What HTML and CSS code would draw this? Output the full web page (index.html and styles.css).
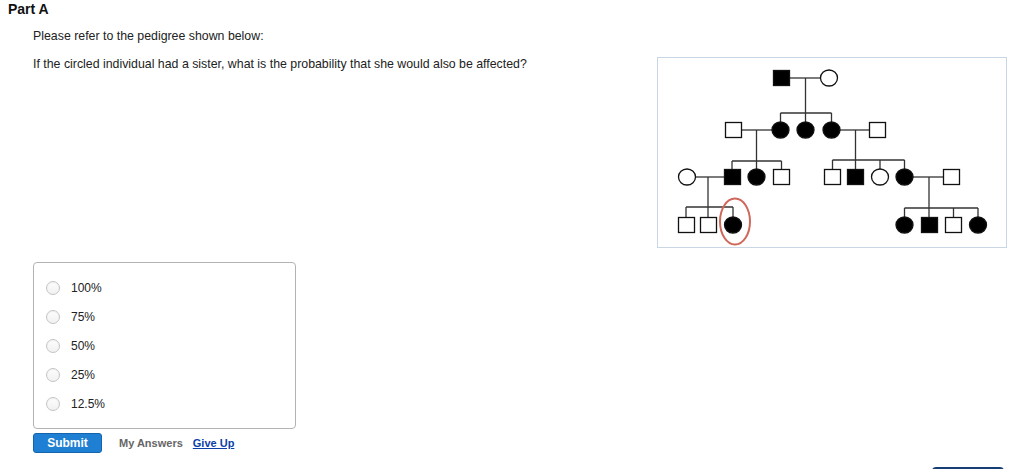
FILE: index.html
```html
<!DOCTYPE html>
<html>
<head>
<meta charset="utf-8">
<link rel="stylesheet" href="styles.css">
</head>
<body>
<h1 class="part-title">Part A</h1>
<div class="row">
  <div class="prompt">
    <p class="intro">Please refer to the pedigree shown below:</p>
    <p class="question">If the circled individual had a sister, what is the probability that she would also be affected?</p>
  </div>
  <div class="figure">
    <svg class="pedigree" width="348" height="189" viewBox="658 58 348 189" xmlns="http://www.w3.org/2000/svg">
      <g class="lines" stroke="#333" stroke-width="1.3" fill="none">
        <line x1="790" y1="78" x2="820" y2="78"/>
        <line x1="805.5" y1="78" x2="805.5" y2="113"/>
        <line x1="780.5" y1="113" x2="831.5" y2="113"/>
        <line x1="780.5" y1="113" x2="780.5" y2="123"/>
        <line x1="805.5" y1="113" x2="805.5" y2="123"/>
        <line x1="831.5" y1="113" x2="831.5" y2="123"/>
        <line x1="742" y1="130" x2="772" y2="130"/>
        <line x1="756.5" y1="130" x2="756.5" y2="161"/>
        <line x1="732" y1="161" x2="781.5" y2="161"/>
        <line x1="732" y1="161" x2="732" y2="170"/>
        <line x1="756.5" y1="161" x2="756.5" y2="170"/>
        <line x1="781.5" y1="161" x2="781.5" y2="170"/>
        <line x1="840" y1="130" x2="869" y2="130"/>
        <line x1="855.5" y1="130" x2="855.5" y2="160"/>
        <line x1="832.5" y1="160" x2="904.5" y2="160"/>
        <line x1="832.5" y1="160" x2="832.5" y2="170"/>
        <line x1="855.5" y1="160" x2="855.5" y2="170"/>
        <line x1="880" y1="160" x2="880" y2="170"/>
        <line x1="904.5" y1="160" x2="904.5" y2="170"/>
        <line x1="696" y1="177" x2="724" y2="177"/>
        <line x1="708" y1="177" x2="708" y2="207"/>
        <line x1="686" y1="207" x2="733" y2="207"/>
        <line x1="686" y1="207" x2="686" y2="218"/>
        <line x1="708" y1="207" x2="708" y2="218"/>
        <line x1="733" y1="207" x2="733" y2="218"/>
        <line x1="913" y1="177" x2="943" y2="177"/>
        <line x1="929" y1="177" x2="929" y2="208"/>
        <line x1="904.5" y1="208" x2="978" y2="208"/>
        <line x1="904.5" y1="208" x2="904.5" y2="218"/>
        <line x1="929" y1="208" x2="929" y2="218"/>
        <line x1="953.5" y1="208" x2="953.5" y2="218"/>
        <line x1="978" y1="208" x2="978" y2="218"/>
      </g>
      <g class="people" stroke="#111" stroke-width="1.3">
        <rect x="773.5" y="70.5" width="16" height="15" fill="#000"/>
        <ellipse cx="829" cy="78" rx="8.5" ry="8" fill="#fff"/>
        <rect x="725.5" y="122.5" width="16" height="15" fill="#fff"/>
        <ellipse cx="780.5" cy="130" rx="8.5" ry="8" fill="#000"/>
        <ellipse cx="805.5" cy="130" rx="8.5" ry="8" fill="#000"/>
        <ellipse cx="831.5" cy="130" rx="8.5" ry="8" fill="#000"/>
        <rect x="869.5" y="122.5" width="16" height="15" fill="#fff"/>
        <ellipse cx="687" cy="177" rx="8.5" ry="8" fill="#fff"/>
        <rect x="724.5" y="169.5" width="16" height="15" fill="#000"/>
        <ellipse cx="756.5" cy="177" rx="8.5" ry="8" fill="#000"/>
        <rect x="773.5" y="169.5" width="16" height="15" fill="#fff"/>
        <rect x="824.5" y="169.5" width="16" height="15" fill="#fff"/>
        <rect x="847.5" y="169.5" width="16" height="15" fill="#000"/>
        <ellipse cx="880" cy="177" rx="8.5" ry="8" fill="#fff"/>
        <ellipse cx="904.5" cy="177" rx="8.5" ry="8" fill="#000"/>
        <rect x="943.5" y="169.5" width="16" height="15" fill="#fff"/>
        <rect x="678.5" y="217.5" width="16" height="15" fill="#fff"/>
        <rect x="700.5" y="217.5" width="16" height="15" fill="#fff"/>
        <ellipse cx="733" cy="225" rx="8.5" ry="8" fill="#000"/>
        <ellipse cx="904.5" cy="225" rx="8.5" ry="8" fill="#000"/>
        <rect x="921.5" y="217.5" width="16" height="15" fill="#000"/>
        <rect x="945.5" y="217.5" width="16" height="15" fill="#fff"/>
        <ellipse cx="978" cy="225" rx="8.5" ry="8" fill="#000"/>
      </g>
      <ellipse class="marker" cx="735" cy="221.5" rx="15" ry="23" fill="none" stroke="#d0685a" stroke-width="2"/>
    </svg>
  </div>
</div>
<div class="answers">
  <label class="option"><span class="radio"></span><span class="option-text">100%</span></label>
  <label class="option"><span class="radio"></span><span class="option-text">75%</span></label>
  <label class="option"><span class="radio"></span><span class="option-text">50%</span></label>
  <label class="option"><span class="radio"></span><span class="option-text">25%</span></label>
  <label class="option"><span class="radio"></span><span class="option-text">12.5%</span></label>
</div>
<div class="actions">
  <button class="submit" type="button">Submit</button>
  <span class="my-answers">My Answers</span>
  <a class="give-up" href="#">Give Up</a>
</div>
<div class="next-row">
  <div class="continue"></div>
</div>
</body>
</html>
```

FILE: styles.css
```css
html, body {
  margin: 0;
  padding: 0;
  background: #fff;
  overflow: hidden;
}
body {
  font-family: "Liberation Sans", Arial, Helvetica, sans-serif;
  color: #222;
  width: 1024px;
  height: 469px;
}
.part-title {
  margin: 0;
  padding: 1px 0 0 8px;
  font-size: 14px;
  line-height: 16px;
  font-weight: bold;
  color: #111;
}
.row {
  display: flex;
  justify-content: space-between;
  align-items: flex-start;
  padding: 0 17px 0 33px;
}
.prompt p {
  margin: 0;
  font-size: 12.35px;
  line-height: 15px;
  color: #222;
}
.prompt .intro {
  margin-top: 12px;
}
.prompt .question {
  margin-top: 13px;
}
.figure {
  margin-top: 40px;
  border: 1px solid #c9d6e6;
  width: 348px;
  height: 189px;
  background: #fff;
}
.pedigree {
  display: block;
}
.answers {
  margin: 14px 0 0 33px;
  width: 261px;
  padding: 10px 0;
  border: 1px solid #b3b3b3;
  border-radius: 4px;
}
.option {
  display: flex;
  align-items: center;
  height: 29px;
  padding-left: 12px;
  font-size: 12px;
  color: #222;
}
.radio {
  width: 12px;
  height: 12px;
  border: 1px solid #c4c4c4;
  border-radius: 50%;
  background: linear-gradient(#fdfdfd, #f1f1f1);
  box-shadow: inset 0 1px 1px rgba(0,0,0,0.05);
  margin-right: 11px;
  flex: none;
}
.actions {
  display: flex;
  align-items: center;
  margin: 4px 0 0 33px;
}
.submit {
  width: 69px;
  height: 20px;
  padding: 0;
  border: 1px solid #1463ad;
  border-radius: 3px;
  background: #1f80d3;
  color: #fff;
  font-family: "Liberation Sans", Arial, Helvetica, sans-serif;
  font-size: 12px;
  font-weight: bold;
  line-height: 18px;
}
.my-answers {
  margin-left: 17px;
  font-size: 11px;
  font-weight: bold;
  color: #666;
}
.give-up {
  margin-left: 10px;
  font-size: 11px;
  font-weight: bold;
  color: #0b3fa8;
  text-decoration: underline;
}
.next-row {
  display: flex;
  justify-content: flex-end;
  margin: 14px 20px 0 0;
}
.continue {
  width: 72px;
  height: 12px;
  border-top: 2px solid #163e74;
  border-radius: 4px 4px 0 0;
  background: #fff;
}
```
